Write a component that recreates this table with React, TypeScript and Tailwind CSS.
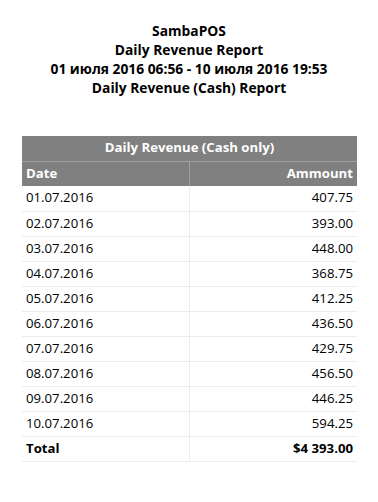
const rows: [string, string][] = [
  ['01.07.2016', '407.75'],
  ['02.07.2016', '393.00'],
  ['03.07.2016', '448.00'],
  ['04.07.2016', '368.75'],
  ['05.07.2016', '412.25'],
  ['06.07.2016', '436.50'],
  ['07.07.2016', '429.75'],
  ['08.07.2016', '456.50'],
  ['09.07.2016', '446.25'],
  ['10.07.2016', '594.25'],
];

export default function App() {
  return (
    <div className="w-[378px] h-[502px] bg-white text-black font-['Segoe_UI','Open_Sans',sans-serif]">
      <div className="pt-[21px] flex flex-col items-center text-[13.8px] font-bold leading-[19px]">
        <div>SambaPOS</div>
        <div>Daily Revenue Report</div>
        <div>01 июля 2016 06:56 - 10 июля 2016 19:53</div>
        <div>Daily Revenue (Cash) Report</div>
      </div>

      <table className="mt-[39px] ml-[22px] w-[335px] border-collapse text-[13.2px]">
        <thead>
          <tr className="bg-[#808080] text-white h-[25px]">
            <th colSpan={2} className="font-bold text-center p-0">Daily Revenue (Cash only)</th>
          </tr>
          <tr className="bg-[#808080] text-white h-[25px] border-t border-[#a0a0a0]">
            <th className="w-[167px] text-left px-[4px] font-bold border-r border-[#a0a0a0]">Date</th>
            <th className="text-right px-[4px] font-bold">Ammount</th>
          </tr>
        </thead>
        <tbody>
          {rows.map(([d, v]) => (
            <tr key={d} className="h-[25px] border-b border-[#ececec]">
              <td className="px-[4px] border-r border-[#ececec]">{d}</td>
              <td className="px-[4px] text-right">{v}</td>
            </tr>
          ))}
          <tr className="h-[25px] border-b border-[#ececec] font-bold">
            <td className="px-[4px] border-r border-[#ececec]">Total</td>
            <td className="px-[4px] text-right">$4 393.00</td>
          </tr>
        </tbody>
      </table>
    </div>
  );
}
